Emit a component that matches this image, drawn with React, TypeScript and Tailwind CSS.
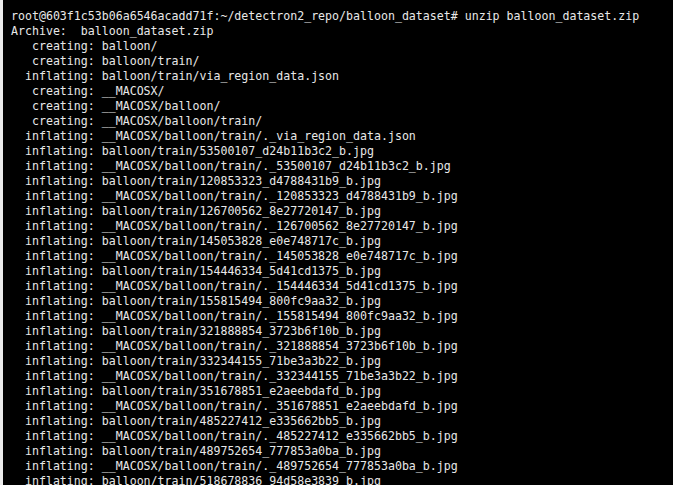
const lines = [
  "root@603f1c53b06a6546acadd71f:~/detectron2_repo/balloon_dataset# unzip balloon_dataset.zip",
  "Archive:  balloon_dataset.zip",
  "   creating: balloon/",
  "   creating: balloon/train/",
  "  inflating: balloon/train/via_region_data.json",
  "   creating: __MACOSX/",
  "   creating: __MACOSX/balloon/",
  "   creating: __MACOSX/balloon/train/",
  "  inflating: __MACOSX/balloon/train/._via_region_data.json",
]

const ids = [
  "53500107_d24b11b3c2",
  "120853323_d4788431b9",
  "126700562_8e27720147",
  "145053828_e0e748717c",
  "154446334_5d41cd1375",
  "155815494_800fc9aa32",
  "321888854_3723b6f10b",
  "332344155_71be3a3b22",
  "351678851_e2aeebdafd",
  "485227412_e335662bb5",
  "489752654_777853a0ba",
  "518678836_94d58e3839",
]

for (const id of ids) {
  lines.push(`  inflating: balloon/train/${id}_b.jpg`)
  lines.push(`  inflating: __MACOSX/balloon/train/._${id}_b.jpg`)
}

export default function App() {
  return (
    <div className="h-[485px] w-full overflow-hidden bg-black border-l-[3px] border-[#ececec]">
      <pre className="pl-2 pt-[9px] text-[11.6px] leading-[15px] text-[#e8e8e8] font-['DejaVu_Sans_Mono',monospace]">
        {lines.join("\n")}
      </pre>
    </div>
  )
}
